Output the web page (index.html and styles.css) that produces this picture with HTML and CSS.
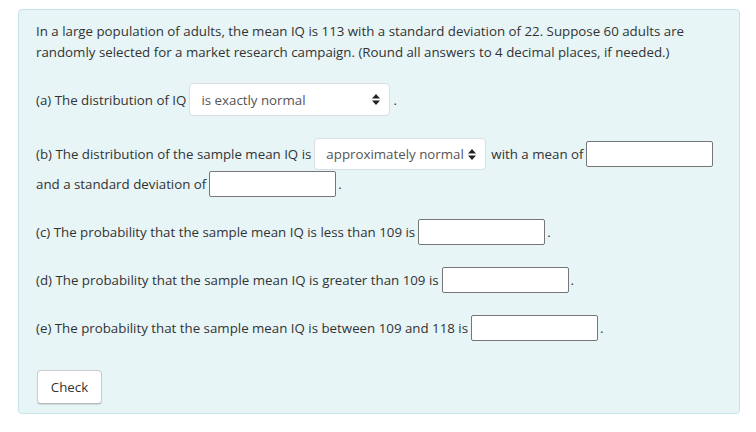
FILE: index.html
```html
<!DOCTYPE html>
<html lang="en">
<head>
<meta charset="utf-8">
<title>Sampling distribution question</title>
<link rel="stylesheet" href="styles.css">
</head>
<body>
<div class="panel">
  <p class="intro">In a large population of adults, the mean IQ is 113 with a standard deviation of 22. Suppose 60 adults are randomly selected for a market research campaign. (Round all answers to 4 decimal places, if needed.)</p>

  <div class="row row-a">
    <span class="txt">(a) The distribution of IQ</span>
    <div class="select select-a">
      <span class="sel-text">is exactly normal</span>
      <svg class="arrows" width="8" height="11" viewBox="0 0 8 11"><path d="M4 0 L8 4.5 L0 4.5 Z M0 6.5 L8 6.5 L4 11 Z" fill="#222"/></svg>
    </div>
    <span class="dot">.</span>
  </div>

  <div class="row row-b1">
    <span class="txt">(b) The distribution of the sample mean IQ is</span>
    <div class="select select-b">
      <span class="sel-text">approximately normal</span>
      <svg class="arrows" width="8" height="11" viewBox="0 0 8 11"><path d="M4 0 L8 4.5 L0 4.5 Z M0 6.5 L8 6.5 L4 11 Z" fill="#222"/></svg>
    </div>
    <span class="txt gap-l">with a mean of</span>
    <span class="input"></span>
  </div>
  <div class="row row-b2">
    <span class="txt">and a standard deviation of</span>
    <span class="input"></span>
    <span class="dot">.</span>
  </div>

  <div class="row row-c">
    <span class="txt">(c) The probability that the sample mean IQ is less than 109 is</span>
    <span class="input"></span>
    <span class="dot">.</span>
  </div>

  <div class="row row-d">
    <span class="txt">(d) The probability that the sample mean IQ is greater than 109 is</span>
    <span class="input"></span>
    <span class="dot">.</span>
  </div>

  <div class="row row-e">
    <span class="txt">(e) The probability that the sample mean IQ is between 109 and 118 is</span>
    <span class="input"></span>
    <span class="dot">.</span>
  </div>

  <div class="actions">
    <button class="btn" type="button">Check</button>
  </div>
</div>
</body>
</html>
```

FILE: styles.css
```css
html, body {
  margin: 0;
  padding: 0;
  background: #ffffff;
}

body {
  font-family: "Open Sans", "Noto Sans", sans-serif;
  font-size: 13.3px;
  color: #333333;
}

.panel {
  margin: 9px 0 0 18px;
  width: 686px;
  padding: 11px 17px 9px 17px;
  background: #e7f5f7;
  border: 1px solid #c3e4ea;
  border-radius: 4px;
}

.intro {
  margin: 0;
  line-height: 21px;
}

.row {
  display: flex;
  align-items: center;
  white-space: nowrap;
}

.row-a { margin-top: 20px; height: 33px; }
.row-b1 { margin-top: 22px; height: 32px; }
.row-b2 { height: 28px; }
.row-c { margin-top: 21px; height: 26px; }
.row-d { margin-top: 22px; height: 26px; }
.row-e { margin-top: 22px; height: 26px; }

.select {
  display: flex;
  align-items: center;
  justify-content: space-between;
  box-sizing: border-box;
  margin-left: 3px;
  padding: 0 9px 0 11px;
  background: #ffffff;
  border: 1px solid #d9dee2;
  border-radius: 4px;
  color: #555555;
}

.select-a { width: 201px; height: 33px; }
.select-b { width: 172px; height: 32px; }

.arrows { flex: none; }

.gap-l { margin-left: 5px; }

.input {
  display: block;
  box-sizing: border-box;
  width: 127px;
  height: 26px;
  margin-left: 3px;
  background: #ffffff;
  border: 1px solid #767676;
  border-radius: 2px;
}

.dot { margin-left: 2px; }
.row-a .dot { margin-left: 3px; }

.actions {
  margin-top: 29px;
}

.btn {
  display: block;
  box-sizing: border-box;
  width: 65px;
  height: 34px;
  margin-left: 1px;
  padding: 0;
  font-family: inherit;
  font-size: 13.3px;
  color: #333333;
  background: #ffffff;
  border: 1px solid #cccccc;
  border-bottom-color: #b8b8b8;
  border-radius: 4px;
  box-shadow: 0 1px 1px rgba(0, 0, 0, 0.12);
}
```
